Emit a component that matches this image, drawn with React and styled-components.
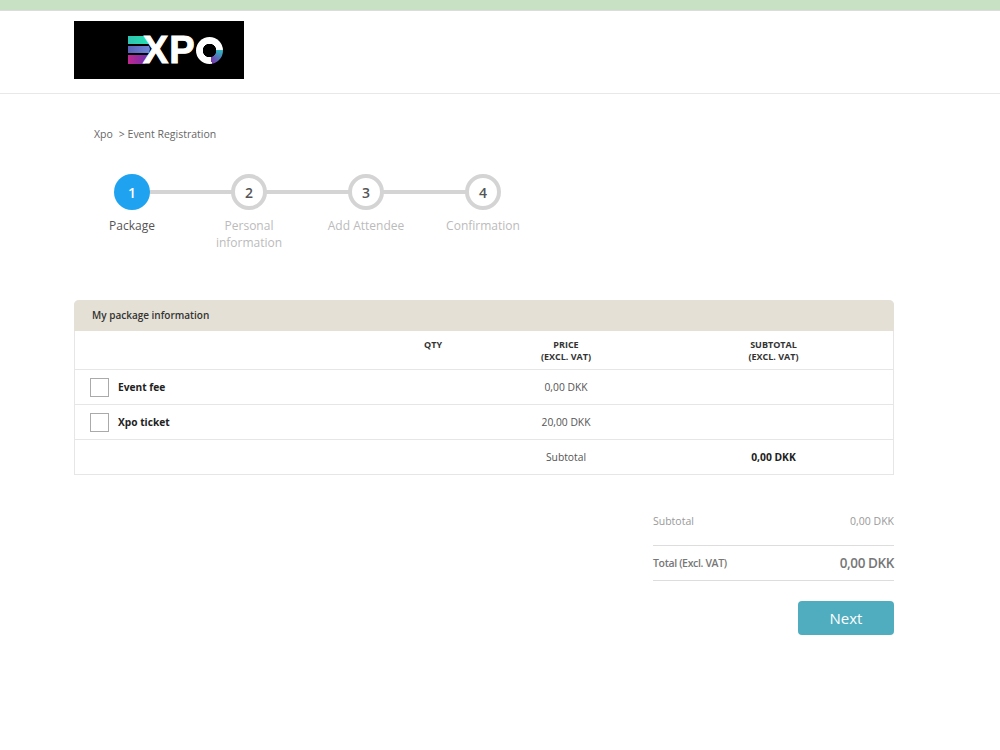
import styled, { createGlobalStyle } from 'styled-components';

const steps = [
  { n: 1, label: 'Package' },
  { n: 2, label: 'Personal information' },
  { n: 3, label: 'Add Attendee' },
  { n: 4, label: 'Confirmation' },
];

const items = [
  { name: 'Event fee', price: '0,00 DKK' },
  { name: 'Xpo ticket', price: '20,00 DKK' },
];

function LogoBars() {
  return (
    <svg width="22" height="28" viewBox="0 0 22 28">
      <defs>
        <linearGradient id="barTop" x1="0" x2="1" y1="0" y2="0">
          <stop offset="0" stopColor="#2fc4b2" />
          <stop offset="1" stopColor="#25e0b0" />
        </linearGradient>
        <linearGradient id="barMid" x1="0" x2="1" y1="0" y2="0">
          <stop offset="0" stopColor="#5a62b8" />
          <stop offset="1" stopColor="#6f86d8" />
        </linearGradient>
        <linearGradient id="barBot" x1="0" x2="1" y1="0" y2="0">
          <stop offset="0" stopColor="#c0288f" />
          <stop offset="1" stopColor="#6a2fb0" />
        </linearGradient>
      </defs>
      <path d="M0 0h17l4 8H0z" fill="url(#barTop)" />
      <path d="M0 10h21l1 3-1 4H0z" fill="url(#barMid)" />
      <path d="M0 19h21l-4 9H0z" fill="url(#barBot)" />
    </svg>
  );
}

function App() {
  return (
    <>
      <GlobalStyle />
      <TopStrip />
      <Header>
        <Logo>
          <LogoBars />
          <LogoText>XP</LogoText>
          <LogoRing />
        </Logo>
      </Header>
      <Main>
        <Breadcrumb>
          <span>Xpo</span>
          <span>&gt; Event Registration</span>
        </Breadcrumb>
        <Stepper>
          {steps.map((s, i) => (
            <Step key={s.n} $last={i === steps.length - 1}>
              <StepCircle $active={i === 0}>{s.n}</StepCircle>
              <StepLabel $active={i === 0}>{s.label}</StepLabel>
            </Step>
          ))}
        </Stepper>
        <Panel>
          <PanelTitle>My package information</PanelTitle>
          <HeadRow>
            <Cell />
            <HeadCell>QTY</HeadCell>
            <HeadCell>
              PRICE
              <br />
              (EXCL. VAT)
            </HeadCell>
            <HeadCell $sub>
              SUBTOTAL
              <br />
              (EXCL. VAT)
            </HeadCell>
          </HeadRow>
          {items.map((item) => (
            <Row key={item.name}>
              <NameCell>
                <Check />
                <strong>{item.name}</strong>
              </NameCell>
              <Cell />
              <Cell>{item.price}</Cell>
              <Cell $sub />
            </Row>
          ))}
          <Row $end>
            <Cell />
            <Cell />
            <Cell>Subtotal</Cell>
            <Cell $sub>
              <strong>0,00 DKK</strong>
            </Cell>
          </Row>
        </Panel>
        <Summary>
          <SummaryRow>
            <span>Subtotal</span>
            <span>0,00 DKK</span>
          </SummaryRow>
          <TotalRow>
            <TotalLabel>Total (Excl. VAT)</TotalLabel>
            <TotalValue>0,00 DKK</TotalValue>
          </TotalRow>
          <NextButton>Next</NextButton>
        </Summary>
      </Main>
    </>
  );
}

export default App;

//STYLED COMPONENTS
const GlobalStyle = createGlobalStyle`
  body {
    margin: 0;
    background: #fff;
    font-family: "Open Sans", "Liberation Sans", sans-serif;
    color: #444;
  }
`;

const TopStrip = styled.div`
  height: 10px;
  background: #c8e1c5;
  border-bottom: 1px solid #dcdcdc;
`;

const Header = styled.header`
  height: 83px;
  padding: 10px 0 0 74px;
  box-sizing: border-box;
  border-bottom: 1px solid #e8e8e8;
`;

const Logo = styled.div`
  width: 170px;
  height: 58px;
  background: #000;
  display: flex;
  align-items: center;
  padding-left: 54px;
  box-sizing: border-box;
`;

const LogoText = styled.span`
  font-family: "Liberation Sans", sans-serif;
  font-size: 38px;
  font-weight: 700;
  line-height: 1;
  color: #fff;
  letter-spacing: 1px;
  -webkit-text-stroke: 1px #fff;
  margin-left: -7px;
`;

const LogoRing = styled.span`
  width: 27px;
  height: 27px;
  border-radius: 50%;
  background:
    radial-gradient(circle, #000 0 6.5px, transparent 7px),
    conic-gradient(from 90deg, #2fb5c0, #7a35b0 80deg, #fff 80deg, #fff 360deg);
`;

const Main = styled.main`
  width: 820px;
  margin-left: 74px;
`;

const Breadcrumb = styled.div`
  display: flex;
  gap: 6px;
  padding: 32px 0 0 20px;
  font-size: 10.5px;
  line-height: 16px;
  color: #666;
`;

const Stepper = styled.div`
  display: flex;
  margin: 32px 0 0 -0.5px;
`;

const Step = styled.div`
  position: relative;
  width: 117px;
  display: flex;
  flex-direction: column;
  align-items: center;

  &::after {
    content: '';
    display: ${(p) => (p.$last ? 'none' : 'block')};
    position: absolute;
    top: 16px;
    left: 58px;
    width: 117px;
    height: 4px;
    background: #d4d4d4;
  }
`;

const StepCircle = styled.div`
  position: relative;
  z-index: 1;
  width: 36px;
  height: 36px;
  box-sizing: border-box;
  border-radius: 50%;
  display: flex;
  align-items: center;
  justify-content: center;
  font-size: 14px;
  font-weight: 600;
  background: ${(p) => (p.$active ? '#1fa3f0' : '#fff')};
  color: ${(p) => (p.$active ? '#fff' : '#555')};
  border: ${(p) => (p.$active ? 'none' : '4px solid #d4d4d4')};
`;

const StepLabel = styled.div`
  width: 90px;
  margin-top: 7px;
  text-align: center;
  font-size: 12px;
  line-height: 17px;
  color: ${(p) => (p.$active ? '#555' : '#bbb')};
`;

const Panel = styled.section`
  margin-top: 49px;
  border: 1px solid #e6e6e6;
  border-top: none;
  border-radius: 5px 5px 0 0;
`;

const PanelTitle = styled.div`
  height: 31px;
  margin: 0 -1px;
  padding: 0 0 1px 18px;
  box-sizing: border-box;
  display: flex;
  align-items: center;
  background: #e4e0d5;
  border-radius: 5px 5px 0 0;
  font-size: 10px;
  font-weight: 600;
  color: #333;
`;

const Row = styled.div`
  display: grid;
  grid-template-columns: 299px 118px 148px 1fr;
  height: ${(p) => (p.$end ? '34px' : '35px')};
  box-sizing: border-box;
  border-bottom: ${(p) => (p.$end ? 'none' : '1px solid #e6e6e6')};
  font-size: 10.3px;
  color: #555;

  strong {
    font-weight: 700;
    color: #222;
  }
`;

const HeadRow = styled(Row)`
  height: 39px;
`;

const Cell = styled.div`
  display: flex;
  align-items: center;
  justify-content: center;
  padding-left: ${(p) => (p.$sub ? '14px' : '0')};
`;

const HeadCell = styled.div`
  padding: 8px 0 0 ${(p) => (p.$sub ? '14px' : '0')};
  text-align: center;
  font-size: 9px;
  line-height: 12px;
  font-weight: 700;
  color: #333;
`;

const NameCell = styled.div`
  display: flex;
  align-items: center;
  gap: 9px;
  padding-left: 15px;
  font-size: 10.2px;
`;

const Check = styled.span`
  width: 19px;
  height: 19px;
  box-sizing: border-box;
  border: 1px solid #aaa;
  background: #fff;
`;

const Summary = styled.div`
  width: 241px;
  margin: 37px 0 0 auto;
  display: flex;
  flex-direction: column;
`;

const SummaryRow = styled.div`
  height: 34px;
  box-sizing: border-box;
  display: flex;
  justify-content: space-between;
  align-items: center;
  border-bottom: 1px solid #ddd;
  padding-bottom: 16px;
  font-size: 10.5px;
  color: #999;
`;

const TotalRow = styled.div`
  height: 35px;
  box-sizing: border-box;
  display: flex;
  justify-content: space-between;
  align-items: center;
  border-bottom: 1px solid #ddd;
`;

const TotalLabel = styled.span`
  font-size: 10.5px;
  font-weight: 600;
  letter-spacing: -0.35px;
  color: #777;
`;

const TotalValue = styled.span`
  font-size: 13.5px;
  font-weight: 600;
  letter-spacing: -0.4px;
  color: #777;
`;

const NextButton = styled.button`
  align-self: flex-end;
  width: 96px;
  height: 34px;
  margin-top: 20px;
  border: none;
  border-radius: 4px;
  background: #4fadbf;
  color: #fff;
  font-family: inherit;
  font-size: 15px;
`;
